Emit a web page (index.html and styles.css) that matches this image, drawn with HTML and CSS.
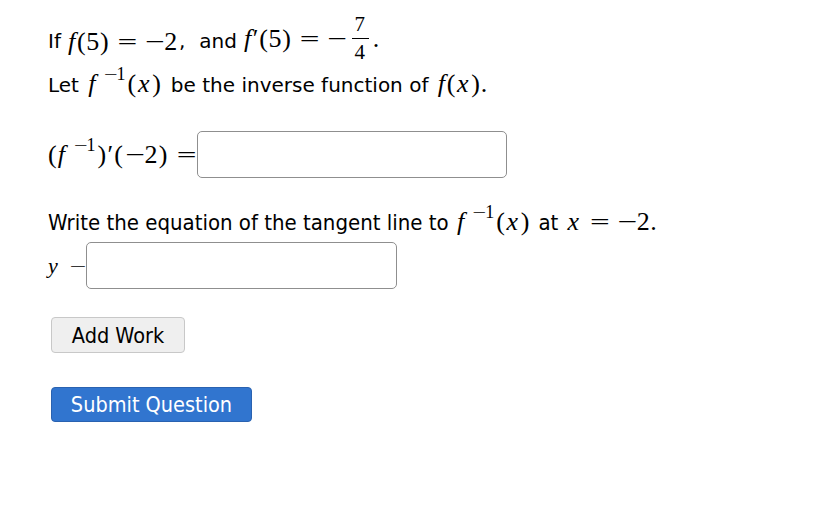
FILE: index.html
```html
<!DOCTYPE html>
<html>
<head>
<meta charset="utf-8">
<link rel="stylesheet" href="styles.css">
</head>
<body>
<div class="page">
  <p class="line l1"><span>If</span><span class="m m1"><i>f</i>(5)<span class="op">=</span><span class="mi">−</span>2</span><span class="cm">,</span><span class="and">and</span><span class="m"><i>f</i>′(5)<span class="op">=</span><span class="mi">−</span><span class="frac"><span class="num">7</span><span class="den">4</span></span>.</span></p>
  <p class="line l2">Let <span class="m"><i>f</i><sup><span class="smi">−</span>1</sup>(<i class="x">x</i>)</span> be the inverse function of <span class="m"><i>f</i>(<i class="x">x</i>).</span></p>
  <div class="answer a1">
    <span class="m lab">(<i>f</i><sup><span class="smi">−</span>1</sup>)′(<span class="mi">−</span>2)<span class="op last">=</span></span><span class="box box1"></span>
  </div>
  <p class="line l3">Write the equation of the tangent line to <span class="m"><i>f</i><sup><span class="smi">−</span>1</sup>(<i class="x">x</i>)</span> at <span class="m"><i class="x">x</i><span class="op">=</span><span class="mi">−</span>2.</span></p>
  <div class="answer a2">
    <span class="m lab"><i>y</i><span class="op last">−</span></span><span class="box box2"></span>
  </div>
  <button class="btn add">Add Work</button>
  <button class="btn submit">Submit Question</button>
</div>
</body>
</html>
```
FILE: styles.css
```css
html, body { margin: 0; padding: 0; background: #fff; }
.page {
  padding: 0 0 0 48px;
  display: flex;
  flex-direction: column;
  align-items: flex-start;
  color: #000;
}
.line { margin: 0; font-family: "DejaVu Sans", Verdana, sans-serif; font-size: 20px; line-height: 30px; white-space: nowrap; }
.m { font-family: "Liberation Serif", "Times New Roman", serif; font-size: 26px; line-height: 26px; letter-spacing: 0.7px; }
.m i { font-style: italic; margin-right: 1px; }
.m i.x { margin: 0 2px 0 1px; }
.m sup { font-size: 18px; line-height: 18px; vertical-align: 0; position: relative; top: -12px; margin: 0 2px 0 6px; letter-spacing: 0; }
.op, .mi, .smi { display: inline-block; text-align: center; font-family: "DejaVu Sans", sans-serif; font-weight: 200; letter-spacing: 0; }
.op { width: 0.778em; margin: 0 0.278em; }
.mi { width: 0.778em; }
.smi { width: 0.74em; }
.l1 { margin-top: 16px; height: 50px; display: flex; align-items: center; }
.l1 .m { margin: 0 0 0 7px; }
.l1 .cm { margin-left: 1px; }
.l1 .and { margin-left: 14px; }
.frac { display: inline-flex; flex-direction: column; align-items: center; vertical-align: middle; font-size: 21px; line-height: 19px; margin: 0 4px 0 5px; position: relative; top: -3px; }
.frac .num { border-bottom: 1px solid #000; padding: 0 3px 4px; }
.frac .den { padding-top: 4px; }
.l2 { margin-top: 4px; }
.l2 .m, .l3 .m { margin: 0 3px; }
.answer { display: flex; align-items: center; }
.a1 { margin-top: 31px; }
.a1 .lab { letter-spacing: 1.2px; }
.a1 .op.last { margin-right: 1px; }
.box { display: block; height: 45px; border: 1px solid #8f8f8f; border-radius: 5px; background: #fff; }
.box1 { width: 308px; }
.l3 { margin-top: 30px; font-family: "DejaVu Sans Condensed", Tahoma, sans-serif; font-size: 22px; }
.l3 .m { margin: 0 2px; }
.a2 { margin-top: 4px; }
.a2 .lab { font-size: 22px; letter-spacing: 0; }
.a2 .op.last { margin: 0 0 0 10px; }
.box2 { width: 309px; }
.btn {
  font-family: "DejaVu Sans Condensed", Tahoma, sans-serif;
  font-size: 21.5px;
  border-radius: 4px;
  margin-left: 3px;
  padding: 0;
  cursor: pointer;
}
.add { margin-top: 28px; width: 134px; height: 36px; background: #efefef; border: 1px solid #c8c8c8; color: #000; }
.submit { margin-top: 34px; width: 201px; height: 35px; background: #3175cf; border: 1px solid #2a62b0; color: #fff; }
```
